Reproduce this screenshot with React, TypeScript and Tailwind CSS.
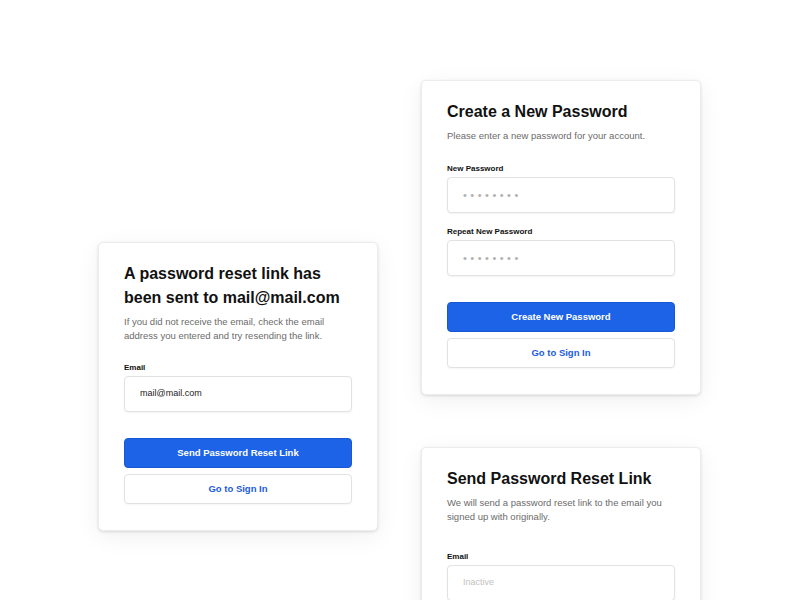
const font = { fontFamily: '"Liberation Sans", Arial, Helvetica, sans-serif' }

function Card({ children }: { children: React.ReactNode }) {
  return (
    <div className="w-[280px] bg-white rounded-[5px] border border-[#ececec] shadow-[0_1px_3px_rgba(0,0,0,0.12),0_6px_24px_rgba(0,0,0,0.06)] px-[25px] pt-[19px] pb-[26px]">
      {children}
    </div>
  )
}

function Title({ children }: { children: React.ReactNode }) {
  return <h2 className="text-[16px] leading-[24px] font-bold text-[#111]">{children}</h2>
}

function Desc({ children }: { children: React.ReactNode }) {
  return <p className="mt-[5px] text-[9.5px] leading-[14px] text-[#6b6b6b]">{children}</p>
}

function Label({ children, className = '' }: { children: React.ReactNode; className?: string }) {
  return <div className={`text-[8px] leading-[12px] font-bold text-[#111] ${className}`}>{children}</div>
}

function Field({ children }: { children: React.ReactNode }) {
  return (
    <div className="mt-[2px] h-[36px] rounded-[4px] border border-[#e2e2e2] bg-white shadow-[0_1px_2px_rgba(0,0,0,0.05)] flex items-center px-[15px]">
      {children}
    </div>
  )
}

function Dots() {
  return <span className="text-[11px] tracking-[3.5px] text-[#b0b0b0]">••••••••</span>
}

function Buttons({ primary }: { primary: string }) {
  return (
    <div className="mt-[26px] flex flex-col gap-[6px]">
      <button className="h-[30px] rounded-[4px] bg-[#1d63e7] border border-[#1a57d2] text-white text-[9.5px] font-bold">
        {primary}
      </button>
      <button className="h-[30px] rounded-[4px] bg-white border border-[#e2e2e2] shadow-[0_1px_2px_rgba(0,0,0,0.04)] text-[#1a5cdb] text-[9.5px] font-bold">
        Go to Sign In
      </button>
    </div>
  )
}

export default function App() {
  return (
    <div style={font} className="w-[800px] h-[600px] overflow-hidden bg-white flex items-start gap-[43px] pl-[98px] pt-[80px]">
      <div className="mt-[162px]">
        <Card>
          <Title>
            A password reset link has
            <br />
            been sent to mail@mail.com
          </Title>
          <Desc>
            If you did not receive the email, check the email address you entered and try resending the link.
          </Desc>
          <Label className="mt-[19px]">Email</Label>
          <Field>
            <span className="text-[9px] text-[#222]">mail@mail.com</span>
          </Field>
          <Buttons primary="Send Password Reset Link" />
        </Card>
      </div>

      <div className="flex flex-col gap-[52px]">
        <Card>
          <Title>Create a New Password</Title>
          <Desc>Please enter a new password for your account.</Desc>
          <Label className="mt-[20px]">New Password</Label>
          <Field>
            <Dots />
          </Field>
          <Label className="mt-[13px]">Repeat New Password</Label>
          <Field>
            <Dots />
          </Field>
          <Buttons primary="Create New Password" />
        </Card>

        <Card>
          <Title>Send Password Reset Link</Title>
          <Desc>We will send a password reset link to the email you signed up with originally.</Desc>
          <Label className="mt-[27px]">Email</Label>
          <Field>
            <span className="text-[9px] text-[#c2c2c2]">Inactive</span>
          </Field>
          <Buttons primary="Send Password Reset Link" />
        </Card>
      </div>
    </div>
  )
}
